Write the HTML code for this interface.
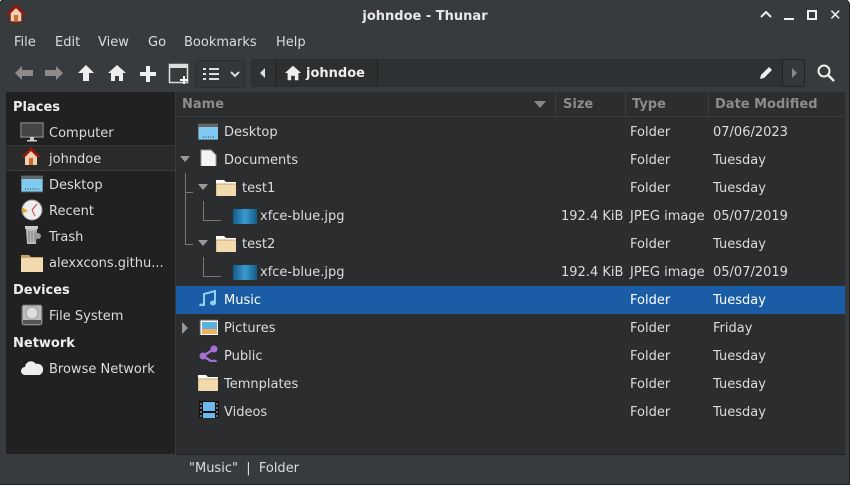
<!DOCTYPE html><html><head><style>
*{margin:0;padding:0;box-sizing:border-box}
body{width:850px;height:485px;background:#fff;font-family:"DejaVu Sans","Liberation Sans",sans-serif;font-size:13px;line-height:21px;color:#dcdcdc;overflow:hidden;position:relative}
.win{position:absolute;left:-1px;top:-1px;width:851px;height:486px;background:#383b3d;border:1px solid #222;border-radius:6px 6px 0 0}
.a{position:absolute;white-space:nowrap}
.side{position:absolute;left:6px;top:92px;width:169px;height:362px;background:#212121}
.list{position:absolute;left:176px;top:92px;width:669px;height:362px;background:#2b2d2f}
.hdr{position:absolute;left:0;top:0;width:669px;height:25px;border-bottom:1px solid #3a3d3f;font-weight:bold;color:#8a8c8e}
.row{position:absolute;left:0;width:669px;height:28px}
.sel{background:#1a5ca6;color:#fff}
.ic{position:absolute;width:20px;height:17px}
</style></head><body><div class="win">
<svg class="a" style="left:6px;top:4px" width="20" height="20" viewBox="0 0 20 20"><path d="M2 10 L10 2 L18 10 L16 10 L16 18 L4 18 L4 10Z" fill="#f1d0b0" stroke="#7a1c14" stroke-width="1.5"/><path d="M2 10 L10 2 L18 10" fill="none" stroke="#8b1a12" stroke-width="3"/><rect x="8" y="11" width="4" height="7" fill="#c46d2c"/></svg>
<div class="a" style="left:0;width:850px;top:6px;text-align:center;font-weight:bold;color:#e8e8e8">johndoe - Thunar</div>
<svg class="a" style="left:760px;top:11px" width="12" height="8"><path d="M1 6 L6 1 L11 6" fill="none" stroke="#eee" stroke-width="2"/></svg>
<div class="a" style="left:784px;top:18px;width:10px;height:2px;background:#eee"></div>
<div class="a" style="left:807px;top:10px;width:10px;height:10px;border:2px solid #eee"></div>
<div class="a" style="left:829px;top:5px;font-size:15px;color:#eee;font-weight:bold">✕</div>
<div class="a" style="left:14px;top:32px">File</div>
<div class="a" style="left:55px;top:32px">Edit</div>
<div class="a" style="left:98px;top:32px">View</div>
<div class="a" style="left:148px;top:32px">Go</div>
<div class="a" style="left:184px;top:32px">Bookmarks</div>
<div class="a" style="left:276px;top:32px">Help</div>
<svg class="a" style="left:12px;top:62px" width="220" height="24" viewBox="0 0 220 24">
<path d="M3 11 L10 4 L10 8 L21 8 L21 14 L10 14 L10 18Z" fill="#8c8c8c"/>
<path d="M51 11 L44 4 L44 8 L33 8 L33 14 L44 14 L44 18Z" fill="#8c8c8c"/>
<path d="M74 3 L82 11 L77 11 L77 19 L71 19 L71 11 L66 11Z" fill="#eee"/>
<path d="M105 3 L114 11 L111 11 L111 19 L107 19 L107 14 L103 14 L103 19 L99 19 L99 11 L96 11Z" fill="#eee"/>
<path d="M134 4 h4 v6 h6 v4 h-6 v6 h-4 v-6 h-6 v-4 h6z" fill="#eee"/>
<rect x="157.5" y="2.5" width="18" height="18" fill="none" stroke="#ddd" stroke-width="1.5"/><rect x="157" y="2" width="19" height="4" fill="#ddd"/><path d="M172 14 v8 M168 18 h8" stroke="#fff" stroke-width="2"/>
</svg>
<div class="a" style="left:195px;top:60px;width:50px;height:28px;border:1px solid #2a2c2e;border-radius:3px;background:#34373a"></div>
<svg class="a" style="left:202px;top:66px" width="40" height="16"><path d="M1 3h3M7 3h10M1 8h3M7 8h10M1 13h3M7 13h10" stroke="#ddd" stroke-width="2"/><path d="M29 6 l4 4 l4 -4" fill="none" stroke="#ddd" stroke-width="2"/></svg>
<div class="a" style="left:251px;top:59px;width:553px;height:28px;border:1px solid #2a2c2e;border-radius:3px;background:#2f3234"></div>
<div class="a" style="left:251px;top:59px;width:25px;height:28px;border-right:1px solid #222"></div>
<svg class="a" style="left:258px;top:66px" width="10" height="14"><path d="M7 2 L2 7 L7 12Z" fill="#ddd"/></svg>
<div class="a" style="left:276px;top:59px;width:102px;height:28px;background:#2c2e30;border-right:1px solid #222"></div>
<svg class="a" style="left:284px;top:64px" width="18" height="18" viewBox="0 0 20 20"><path d="M10 2 L19 10 L16 10 L16 18 L12 18 L12 13 L8 13 L8 18 L4 18 L4 10 L1 10Z" fill="#eee"/></svg>
<div class="a" style="left:306px;top:63px;font-weight:bold;color:#eee">johndoe</div>
<svg class="a" style="left:757px;top:64px" width="18" height="18"><path d="M3 15 L4 11 L12 3 L15 6 L7 14Z" fill="#eee"/></svg>
<div class="a" style="left:782px;top:59px;width:23px;height:28px;border:1px solid #222;border-radius:3px;background:#35383a"></div>
<svg class="a" style="left:790px;top:66px" width="10" height="14"><path d="M2 2 L7 7 L2 12Z" fill="#888"/></svg>
<svg class="a" style="left:815px;top:62px" width="22" height="22"><circle cx="9" cy="9" r="5.5" fill="none" stroke="#eee" stroke-width="2"/><path d="M13 13 L19 19" stroke="#eee" stroke-width="2.5"/></svg>

<div class="side">
<div class="a" style="left:7px;top:5px;font-weight:bold;color:#eee">Places</div>
<div class="a" style="left:0;top:53px;width:169px;height:26px;background:#2a2a2a;border-top:1px solid #3a3a3a;border-bottom:1px solid #3a3a3a"></div>
<svg class="a" style="left:14px;top:30px" width="24" height="20"><rect x="1" y="1" width="22" height="14" fill="#222" stroke="#aaa"/><rect x="2" y="2" width="20" height="12" fill="#444"/><rect x="10" y="15" width="4" height="3" fill="#ccc"/><rect x="7" y="18" width="10" height="1.5" fill="#ccc"/></svg>
<div class="a" style="left:43px;top:31px">Computer</div>
<svg class="a" style="left:15px;top:55px" width="20" height="20" viewBox="0 0 20 20"><path d="M2 10 L10 2 L18 10 L16 10 L16 18 L4 18 L4 10Z" fill="#f1d0b0"/><path d="M2 10 L10 2 L18 10" fill="none" stroke="#8b1a12" stroke-width="3"/><rect x="8" y="11" width="4" height="7" fill="#c46d2c"/></svg>
<div class="a" style="left:43px;top:57px">johndoe</div>
<svg class="a" style="left:15px;top:83px" width="22" height="18"><rect x="0" y="1" width="22" height="16" fill="#7fcaf0" stroke="#555"/><rect x="0" y="1" width="22" height="3" fill="#666"/><path d="M4 14h14" stroke="#345" stroke-dasharray="1 1.5"/></svg>
<div class="a" style="left:43px;top:83px">Desktop</div>
<svg class="a" style="left:15px;top:107px" width="22" height="22"><circle cx="11" cy="11" r="10" fill="#eee" stroke="#999"/><path d="M11 11 L16 5 M11 11 L14 17" stroke="#c44" stroke-width="1"/><path d="M1 8 L7 12 L2 14Z" fill="#e9a820"/></svg>
<div class="a" style="left:43px;top:109px">Recent</div>
<svg class="a" style="left:17px;top:132px" width="20" height="22"><rect x="2" y="2" width="13" height="3" fill="#ccc"/><path d="M3 5 L14 5 L13 20 L4 20Z" fill="#bbb"/><path d="M6 7v11M9 7v11M12 7v11" stroke="#777"/><circle cx="15" cy="12" r="3" fill="#999"/></svg>
<div class="a" style="left:43px;top:135px">Trash</div>
<svg class="a" style="left:15px;top:160px" width="22" height="20"><path d="M0 3 h8 l2 2 h12 v15 h-22z" fill="#c8a36c"/><rect x="0" y="6" width="22" height="14" fill="#f2d9ae"/></svg>
<div class="a" style="left:43px;top:161px">alexxcons.githu...</div>
<div class="a" style="left:7px;top:188px;font-weight:bold;color:#eee">Devices</div>
<svg class="a" style="left:15px;top:212px" width="22" height="22"><rect x="1" y="1" width="20" height="20" rx="2" fill="#bbb" stroke="#666"/><circle cx="11" cy="9" r="6" fill="#ddd" stroke="#999"/><rect x="2" y="16" width="18" height="4" fill="#555"/></svg>
<div class="a" style="left:43px;top:214px">File System</div>
<div class="a" style="left:7px;top:241px;font-weight:bold;color:#eee">Network</div>
<svg class="a" style="left:15px;top:267px" width="22" height="18"><path d="M4 16 a4 4 0 0 1 0-8 a6 6 0 0 1 11-3 a5 5 0 0 1 3 11z" fill="#eee"/></svg>
<div class="a" style="left:43px;top:267px">Browse Network</div>
</div>
<div class="a" style="left:176px;top:260px;width:3px;height:22px;background:#1a5ca6"></div>

<div class="list">
<div class="hdr">
<div class="a" style="left:6px;top:2px">Name</div>
<svg class="a" style="left:358px;top:9px" width="12" height="8"><path d="M0 0h12L6 7z" fill="#888"/></svg>
<div class="a" style="left:379px;top:0;width:1px;height:25px;background:#3a3d3f"></div>
<div class="a" style="left:387px;top:2px">Size</div>
<div class="a" style="left:449px;top:0;width:1px;height:25px;background:#3a3d3f"></div>
<div class="a" style="left:456px;top:2px">Type</div>
<div class="a" style="left:532px;top:0;width:1px;height:25px;background:#3a3d3f"></div>
<div class="a" style="left:539px;top:2px">Date Modified</div>
</div>
<div class="a" style="left:9px;top:81px;width:1px;height:72px;background:#777"></div>
<div class="a" style="left:9px;top:100px;width:8px;height:1px;background:#777"></div>
<div class="a" style="left:9px;top:152px;width:8px;height:1px;background:#777"></div>
<div class="a" style="left:27px;top:109px;width:1px;height:19px;background:#777"></div>
<div class="a" style="left:27px;top:128px;width:18px;height:1px;background:#777"></div>
<div class="a" style="left:27px;top:165px;width:1px;height:19px;background:#777"></div>
<div class="a" style="left:27px;top:184px;width:18px;height:1px;background:#777"></div>

<div class="row" style="top:26px"><svg class="ic" style="left:22px;top:5px" width="22" height="18"><rect x="0" y="1" width="21" height="16" fill="#7fcaf0" stroke="#555"/><rect x="0" y="1" width="21" height="3" fill="#666"/><path d="M5 14h12" stroke="#345" stroke-dasharray="1 1.5"/></svg><div class="a" style="left:48px;top:4px">Desktop</div><div class="a" style="left:454px;top:4px">Folder</div><div class="a" style="left:537px;top:4px">07/06/2023</div></div>
<div class="row" style="top:54px"><svg class="a" style="left:4px;top:10px" width="10" height="8"><path d="M0 0h10L5 6z" fill="#999"/></svg><svg class="ic" style="left:24px;top:3px" width="17" height="21"><path d="M1 1h10l5 5v14h-15z" fill="#f4f4f4" stroke="#999"/></svg><div class="a" style="left:48px;top:4px">Documents</div><div class="a" style="left:454px;top:4px">Folder</div><div class="a" style="left:537px;top:4px">Tuesday</div></div>
<div class="row" style="top:82px"><svg class="a" style="left:22px;top:10px" width="10" height="8"><path d="M0 0h10L5 6z" fill="#999"/></svg><svg class="ic" style="left:40px;top:5px" width="22" height="20"><path d="M0 1 h8 l2 2 h12 v16 h-22z" fill="#fff"/><rect x="0" y="5" width="22" height="14" fill="#f2d9ae" stroke="#c8a36c"/></svg><div class="a" style="left:66px;top:4px">test1</div><div class="a" style="left:454px;top:4px">Folder</div><div class="a" style="left:537px;top:4px">Tuesday</div></div>
<div class="row" style="top:110px"><div class="a" style="left:57px;top:7px;width:24px;height:15px;background:linear-gradient(90deg,#135a88,#3a9ad0,#135a88)"></div><div class="a" style="left:84px;top:4px">xfce-blue.jpg</div><div class="a" style="left:385px;top:4px">192.4 KiB</div><div class="a" style="left:454px;top:4px">JPEG image</div><div class="a" style="left:537px;top:4px">05/07/2019</div></div>
<div class="row" style="top:138px"><svg class="a" style="left:22px;top:10px" width="10" height="8"><path d="M0 0h10L5 6z" fill="#999"/></svg><svg class="ic" style="left:40px;top:5px" width="22" height="20"><path d="M0 1 h8 l2 2 h12 v16 h-22z" fill="#fff"/><rect x="0" y="5" width="22" height="14" fill="#f2d9ae" stroke="#c8a36c"/></svg><div class="a" style="left:66px;top:4px">test2</div><div class="a" style="left:454px;top:4px">Folder</div><div class="a" style="left:537px;top:4px">Tuesday</div></div>
<div class="row" style="top:166px"><div class="a" style="left:57px;top:7px;width:24px;height:15px;background:linear-gradient(90deg,#135a88,#3a9ad0,#135a88)"></div><div class="a" style="left:84px;top:4px">xfce-blue.jpg</div><div class="a" style="left:385px;top:4px">192.4 KiB</div><div class="a" style="left:454px;top:4px">JPEG image</div><div class="a" style="left:537px;top:4px">05/07/2019</div></div>
<div class="row sel" style="top:194px"><svg class="ic" style="left:22px;top:3px" width="20" height="22"><path d="M6 17 V5 L17 2 V14" fill="none" stroke="#8fd0f5" stroke-width="2"/><ellipse cx="4" cy="17" rx="3" ry="2.5" fill="#8fd0f5"/><ellipse cx="15" cy="14" rx="3" ry="2.5" fill="#8fd0f5"/></svg><div class="a" style="left:48px;top:4px">Music</div><div class="a" style="left:454px;top:4px">Folder</div><div class="a" style="left:537px;top:4px">Tuesday</div></div>
<div class="row" style="top:222px"><svg class="a" style="left:6px;top:8px" width="8" height="12"><path d="M0 0L6 6L0 12z" fill="#999"/></svg><svg class="ic" style="left:22px;top:4px" width="22" height="20"><rect x="2" y="2" width="19" height="16" fill="#fff" stroke="#555"/><rect x="4" y="4" width="15" height="7" fill="#5ab0e0"/><rect x="4" y="11" width="15" height="5" fill="#f0b060"/></svg><div class="a" style="left:48px;top:4px">Pictures</div><div class="a" style="left:454px;top:4px">Folder</div><div class="a" style="left:537px;top:4px">Friday</div></div>
<div class="row" style="top:250px"><svg class="ic" style="left:22px;top:3px" width="22" height="22"><path d="M5 11 L16 4 M5 11 L16 18" stroke="#a66fd6" stroke-width="2.5"/><circle cx="5" cy="11" r="3.5" fill="#a66fd6"/><circle cx="16" cy="4" r="3.5" fill="#a66fd6"/><circle cx="16" cy="18" r="3.5" fill="#a66fd6"/></svg><div class="a" style="left:48px;top:4px">Public</div><div class="a" style="left:454px;top:4px">Folder</div><div class="a" style="left:537px;top:4px">Tuesday</div></div>
<div class="row" style="top:278px"><svg class="ic" style="left:22px;top:4px" width="22" height="20"><path d="M0 1 h8 l2 2 h12 v16 h-22z" fill="#fff"/><rect x="0" y="5" width="22" height="14" fill="#f2d9ae" stroke="#c8a36c"/></svg><div class="a" style="left:48px;top:4px">Temnplates</div><div class="a" style="left:454px;top:4px">Folder</div><div class="a" style="left:537px;top:4px">Tuesday</div></div>
<div class="row" style="top:306px"><svg class="ic" style="left:23px;top:3px" width="20" height="22"><rect x="0" y="0" width="20" height="22" fill="#111"/><rect x="4" y="1" width="12" height="9" fill="#6bb8ec"/><rect x="4" y="12" width="12" height="9" fill="#6bb8ec"/><path d="M1 3h2M1 7h2M1 11h2M1 15h2M1 19h2M17 3h2M17 7h2M17 11h2M17 15h2M17 19h2" stroke="#ccc"/></svg><div class="a" style="left:48px;top:4px">Videos</div><div class="a" style="left:454px;top:4px">Folder</div><div class="a" style="left:537px;top:4px">Tuesday</div></div>
</div>
<div class="a" style="left:176px;top:454px;width:669px;height:1px;background:#222"></div>
<div class="a" style="left:189px;top:458px">"Music"&nbsp;&nbsp;|&nbsp;&nbsp;Folder</div>
</div></body></html>
